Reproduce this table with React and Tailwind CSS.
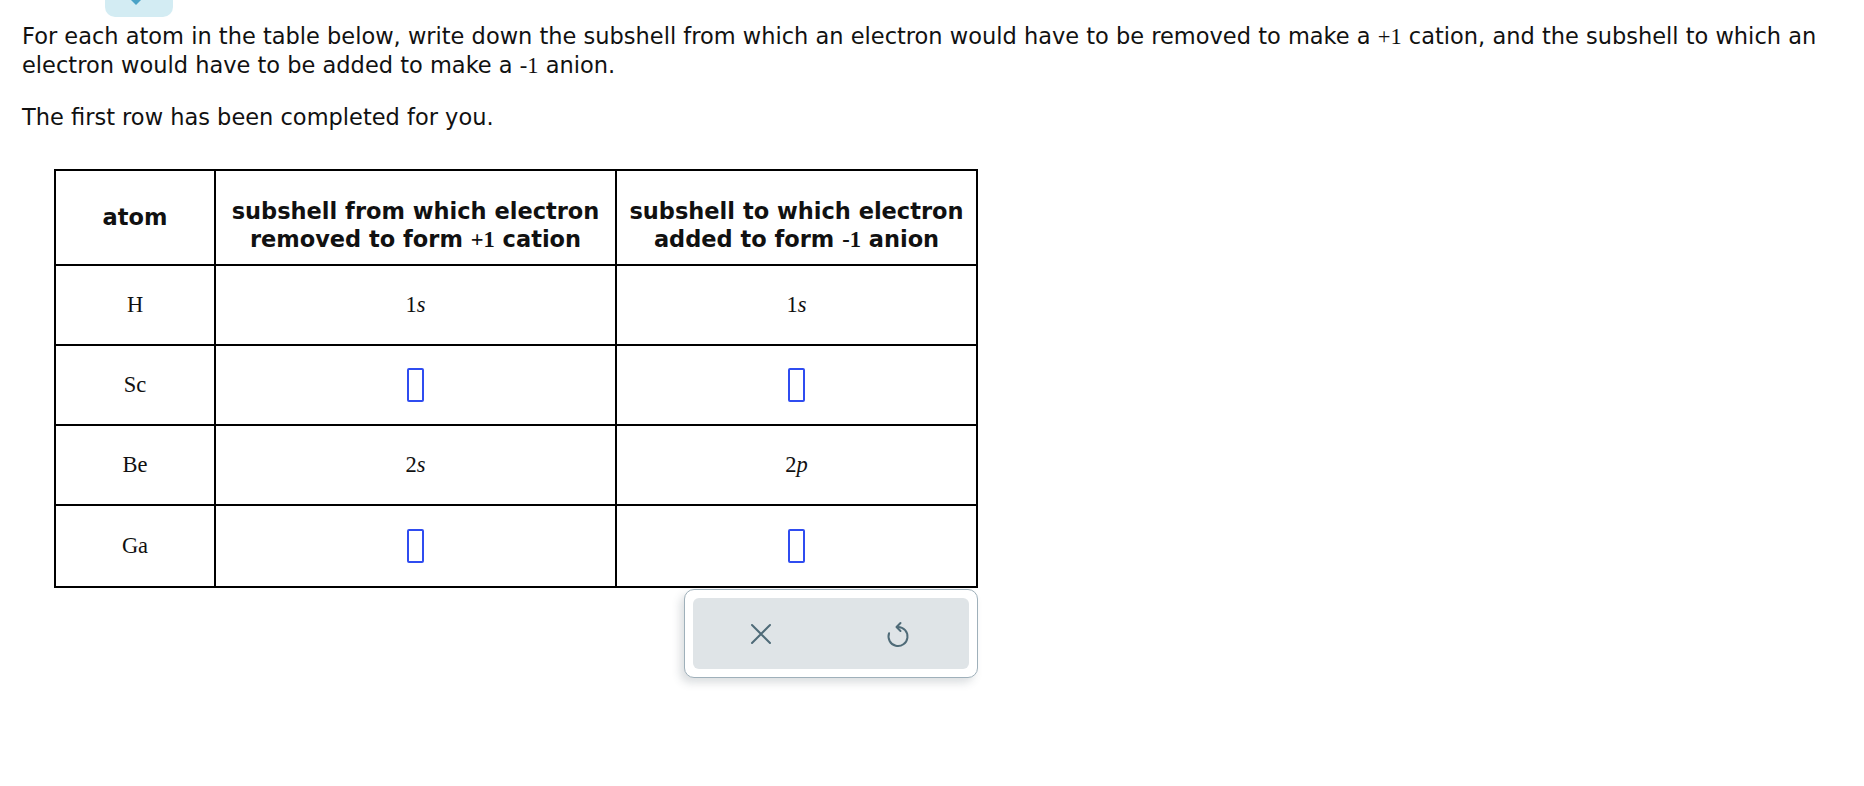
const sans = { fontFamily: '"DejaVu Sans", Verdana, sans-serif' };
const serif = { fontFamily: '"Liberation Serif", "Times New Roman", serif' };

function Blank() {
    return <span className="inline-block w-[17px] h-[34px] border-2 border-[#2f4cf0] rounded-[2px] align-middle" />;
}

function Sub({ n, l }) {
    return (
        <span style={serif} className="text-[22.5px]">
            {n}<i>{l}</i>
        </span>
    );
}

function CloseIcon() {
    return (
        <svg width="22" height="22" viewBox="0 0 22 22" fill="none" stroke="currentColor" strokeWidth="2" strokeLinecap="round">
            <path d="M2 2 L20 20 M20 2 L2 20" />
        </svg>
    );
}

function UndoIcon() {
    return (
        <svg width="26" height="28" viewBox="0 0 26 28" fill="none" stroke="currentColor" strokeWidth="2" strokeLinecap="round" strokeLinejoin="round">
            <path d="M12 7 a9.5 9.5 0 1 1 -8.9 6.2" />
            <path d="M14.5 3 L10.5 7 L14.5 11" />
        </svg>
    );
}

const rows = [
    { atom: "H", from: <Sub n="1" l="s" />, to: <Sub n="1" l="s" />, h: "h-[80px]" },
    { atom: "Sc", from: <Blank />, to: <Blank />, h: "h-[80px]" },
    { atom: "Be", from: <Sub n="2" l="s" />, to: <Sub n="2" l="p" />, h: "h-[80px]" },
    { atom: "Ga", from: <Blank />, to: <Blank />, h: "h-[82px]" },
];

export default function App() {
    return (
        <div className="bg-white min-h-[786px] text-[#111]" style={sans}>
            <div className="ml-[105px] w-[68px] h-[17px] bg-[#d3ecf3] rounded-b-[10px] flex justify-center">
                <svg width="14" height="6" viewBox="0 0 14 6" className="ml-[-6px]">
                    <path d="M2 0 L7 5 L12 0 Z" fill="#4aa2c6" />
                </svg>
            </div>

            <div className="pl-[22px] pr-[30px] pt-[5px] text-[22.5px] leading-[28.4px]">
                <p>
                    For each atom in the table below, write down the subshell from which an electron would have to be removed to make a{" "}
                    <span style={serif}>+1</span> cation, and the subshell to which an electron would have to be added to make a{" "}
                    <span style={serif}>-1</span> anion.
                </p>
                <p className="mt-[22px]">The first row has been completed for you.</p>
            </div>

            <div className="ml-[54px] mt-[38px] inline-flex flex-col">
                <table className="border-collapse table-fixed">
                    <thead>
                        <tr className="h-[95px] font-bold text-[22.5px] leading-[28.5px]">
                            <th className="w-[160px] border-2 border-black font-bold">atom</th>
                            <th className="w-[401px] border-2 border-black font-bold pt-[16px]">
                                subshell from which electron
                                <br />
                                removed to form <span style={serif}>+1</span> cation
                            </th>
                            <th className="w-[361px] border-2 border-black font-bold pt-[16px]">
                                subshell to which electron
                                <br />
                                added to form <span style={serif}>-1</span> anion
                            </th>
                        </tr>
                    </thead>
                    <tbody>
                        {rows.map((r) => (
                            <tr key={r.atom} className={r.h}>
                                <td className="border-2 border-black text-center text-[22.5px]" style={serif}>{r.atom}</td>
                                <td className="border-2 border-black text-center">{r.from}</td>
                                <td className="border-2 border-black text-center">{r.to}</td>
                            </tr>
                        ))}
                    </tbody>
                </table>

                <div className="self-end w-[294px] mt-[1px] p-2 bg-white border border-[#9fb0ba] rounded-[10px] shadow-[-4px_5px_8px_rgba(60,80,90,0.18)]">
                    <div className="h-[71px] bg-[#dfe4e7] rounded-[6px] flex items-center justify-around text-[#4f6b78]">
                        <CloseIcon />
                        <UndoIcon />
                    </div>
                </div>
            </div>
        </div>
    );
}
